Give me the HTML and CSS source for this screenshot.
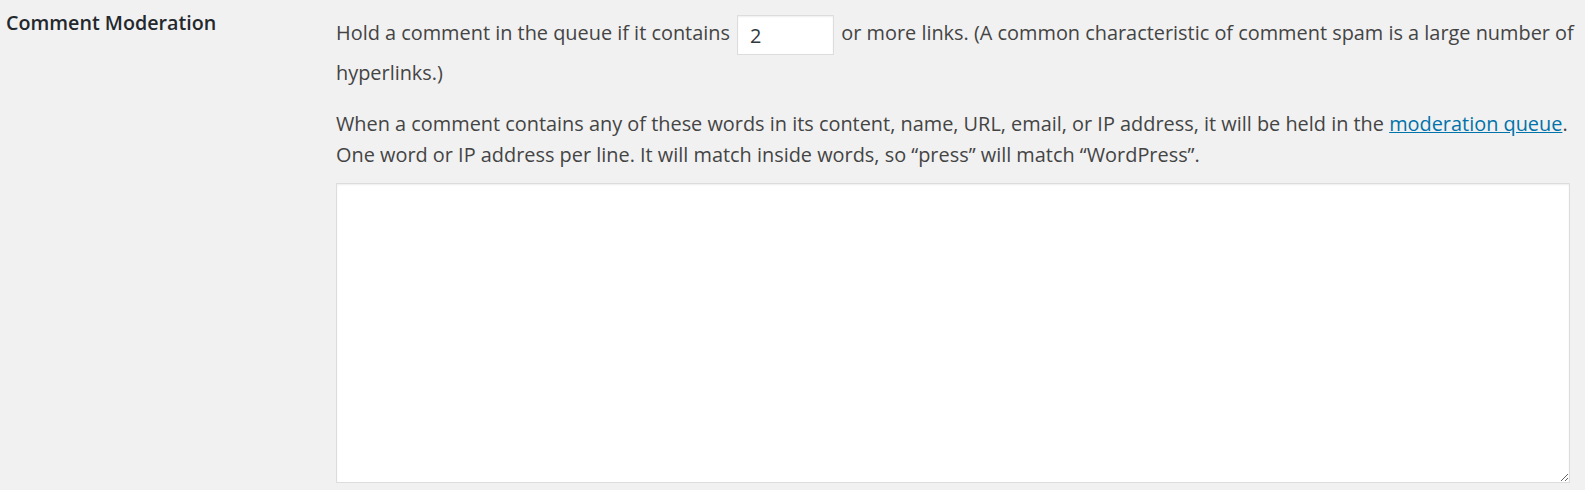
FILE: index.html
```html
<!DOCTYPE html>
<html lang="en">
<head>
<meta charset="utf-8">
<title>Comment Moderation</title>
<link rel="stylesheet" href="styles.css">
</head>
<body>
<div class="form-row">
  <div class="label">Comment Moderation</div>
  <div class="field">
    <p class="line first">Hold a comment in the queue if it contains <input class="num" type="text" value="2"> or more links. (A common characteristic of comment spam is a large number of hyperlinks.)</p>
    <p class="line desc">When a comment contains any of these words in its content, name, URL, email, or IP address, it will be held in the <a href="#" class="link">moderation queue</a>. One word or IP address per line. It will match inside words, so “press” will match “WordPress”.</p>
    <textarea class="words"></textarea>
  </div>
</div>
</body>
</html>
```
FILE: styles.css
```css
html, body {
  margin: 0;
  padding: 0;
  background: #f1f1f1;
}
body {
  font-family: "Open Sans", "Noto Sans", sans-serif;
  font-size: 19.9px;
  color: #444;
}
.form-row {
  display: grid;
  grid-template-columns: 336px 1246px;
}
.label {
  padding: 11px 0 0 6px;
  font-size: 19.7px;
  font-weight: 600;
  color: #23282d;
  line-height: 24px;
}
.field {
  padding-top: 15px;
}
.line {
  margin: 0;
  line-height: 31px;
}
.first {
  line-height: 36px;
}
.desc {
  margin-top: 17px;
}
.num {
  box-sizing: border-box;
  width: 97px;
  height: 40px;
  margin: 0 2px;
  padding: 0 12px;
  border: 1px solid #ddd;
  box-shadow: inset 0 1px 2px rgba(0,0,0,0.07);
  background: #fff;
  font: inherit;
  color: #32373c;
  vertical-align: middle;
}
.link {
  color: #0073aa;
  text-decoration: underline;
}
.words {
  display: block;
  box-sizing: border-box;
  width: 1234px;
  height: 300px;
  margin-top: 13px;
  border: 1px solid #ddd;
  box-shadow: inset 0 1px 2px rgba(0,0,0,0.07);
  background: #fff;
  resize: vertical;
  font: inherit;
}
```
